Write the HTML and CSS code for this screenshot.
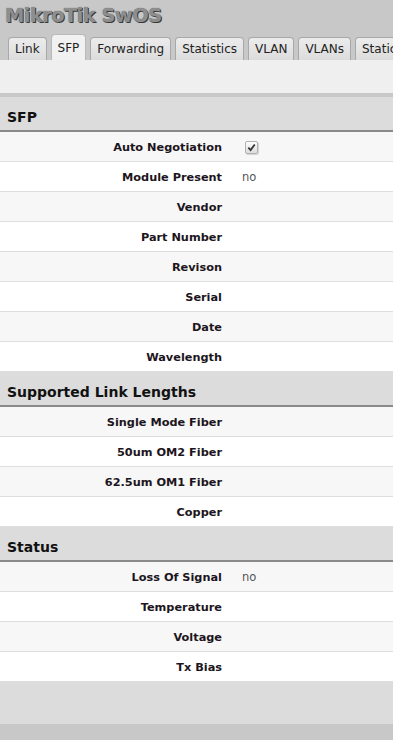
FILE: index.html
```html
<!DOCTYPE html>
<html>
<head>
<meta charset="utf-8">
<link rel="stylesheet" href="styles.css">
</head>
<body>
<header class="top">
  <h1 class="brand">MikroTik SwOS</h1>
  <nav class="tabs">
    <span class="tab">Link</span>
    <span class="tab active">SFP</span>
    <span class="tab">Forwarding</span>
    <span class="tab">Statistics</span>
    <span class="tab">VLAN</span>
    <span class="tab">VLANs</span>
    <span class="tab">Static Hosts</span>
  </nav>
</header>
<div class="toolbar"></div>
<main class="content">
  <section class="group">
    <h2 class="group-title">SFP</h2>
    <div class="row"><div class="label">Auto Negotiation</div><div class="value"><span class="check"><svg viewBox="0 0 10 10" width="9" height="9"><path d="M1.5 5.2 L4 7.8 L8.6 1.6" fill="none" stroke="#333" stroke-width="2"/></svg></span></div></div>
    <div class="row"><div class="label">Module Present</div><div class="value">no</div></div>
    <div class="row"><div class="label">Vendor</div><div class="value"></div></div>
    <div class="row"><div class="label">Part Number</div><div class="value"></div></div>
    <div class="row"><div class="label">Revison</div><div class="value"></div></div>
    <div class="row"><div class="label">Serial</div><div class="value"></div></div>
    <div class="row"><div class="label">Date</div><div class="value"></div></div>
    <div class="row"><div class="label">Wavelength</div><div class="value"></div></div>
  </section>
  <section class="group">
    <h2 class="group-title">Supported Link Lengths</h2>
    <div class="row"><div class="label">Single Mode Fiber</div><div class="value"></div></div>
    <div class="row"><div class="label">50um OM2 Fiber</div><div class="value"></div></div>
    <div class="row"><div class="label">62.5um OM1 Fiber</div><div class="value"></div></div>
    <div class="row"><div class="label">Copper</div><div class="value"></div></div>
  </section>
  <section class="group">
    <h2 class="group-title">Status</h2>
    <div class="row"><div class="label">Loss Of Signal</div><div class="value">no</div></div>
    <div class="row"><div class="label">Temperature</div><div class="value"></div></div>
    <div class="row"><div class="label">Voltage</div><div class="value"></div></div>
    <div class="row"><div class="label">Tx Bias</div><div class="value"></div></div>
  </section>
</main>
<footer class="bottom"></footer>
</body>
</html>
```
FILE: styles.css
```css
html, body {
  margin: 0;
  padding: 0;
}
body {
  background: #c8c8c8;
  font-family: "DejaVu Sans", Verdana, sans-serif;
  font-size: 12px;
  color: #222;
  width: 393px;
  overflow: hidden;
}
.top {
  height: 60px;
  background: #c8c8c8;
  display: flex;
  flex-direction: column;
  overflow: hidden;
}
.brand {
  margin: 0;
  padding: 3px 0 0 5px;
  height: 32px;
  box-sizing: border-box;
  font-size: 19.5px;
  font-weight: bold;
  color: #8e8e8e;
  text-shadow: 1px 1px 0 #3a3a3a, 0 0 1px #555;
  line-height: 26px;
  letter-spacing: -0.6px;
  white-space: nowrap;
}
.tabs {
  display: flex;
  align-items: flex-end;
  gap: 4px;
  padding-left: 8px;
  height: 28px;
  white-space: nowrap;
}
.tab {
  flex: none;
  height: 22px;
  line-height: 22px;
  padding: 0 6px;
  background: linear-gradient(#ececec, #dcdcdc);
  border: 1px solid #a8a8a8;
  border-bottom: none;
  border-radius: 4px 4px 0 0;
  color: #222;
  font-size: 12px;
}
.tab.active {
  height: 25px;
  line-height: 26px;
  background: #f1f1f1;
  border-color: #b8b8b8;
}
.toolbar {
  height: 33px;
  background: #efefef;
}
.content {
  margin-top: 4px;
}
.group-title {
  margin: 0;
  height: 33px;
  line-height: 41px;
  padding-left: 7px;
  background: #dcdcdc;
  border-bottom: 2px solid #8a8a8a;
  font-size: 14px;
  font-weight: bold;
  color: #111;
}
.row {
  display: grid;
  grid-template-columns: 232px 1fr;
  height: 29px;
  border-bottom: 1px solid #dedede;
  align-items: center;
  background: #fff;
  font-size: 11.3px;
}
.row:nth-of-type(odd) {
  background: #f7f7f7;
}
.label {
  text-align: right;
  padding-right: 10px;
  padding-top: 1px;
  font-weight: bold;
  color: #1c1520;
}
.value {
  padding-left: 10px;
  padding-top: 1px;
  color: #555;
  display: flex;
  align-items: center;
  font-size: 11.5px;
}
.check {
  margin-left: 3px;
  width: 11px;
  height: 11px;
  border: 1px solid #b0b0b0;
  border-radius: 2px;
  background: linear-gradient(#fdfdfd, #dcdcdc);
  box-shadow: 1px 1px 1px rgba(0,0,0,0.15);
  display: flex;
  align-items: center;
  justify-content: center;
}
.bottom {
  height: 42px;
  background: #dcdcdc;
}
```
